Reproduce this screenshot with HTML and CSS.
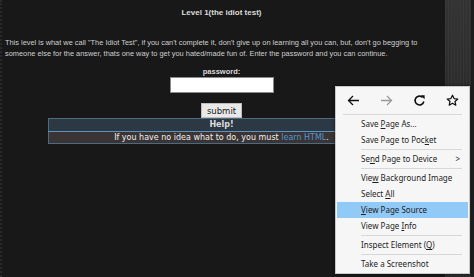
FILE: index.html
```html
<!DOCTYPE html>
<html lang="en">
<head>
    <meta charset="UTF-8">
    <title>Level 1</title>
    <link rel="stylesheet" href="styles.css">
</head>
<body>
    <div class="page">
        <main class="content">
            <h1>Level 1(the idiot test)</h1>
            <p class="intro">This level is what we call "The Idiot Test", if you can't complete it, don't give up on learning all you can, but, don't go begging to someone else for the answer, thats one way to get you hated/made fun of. Enter the password and you can continue.</p>
            <form class="login">
                <label for="pass">password:</label>
                <input id="pass" type="password">
                <button type="button">submit</button>
            </form>
            <table class="help">
                <tr><th>Help!</th></tr>
                <tr><td>If you have no idea what to do, you must <a href="#">learn HTML</a>.</td></tr>
            </table>
        </main>
        <div class="edge"></div>
    </div>

    <div class="context-menu">
        <div class="nav-row">
            <span class="nav-icon">
                <svg width="13" height="13" viewBox="0 0 13 13"><path d="M12 6.5H1.5M6 2L1.5 6.5 6 11" fill="none" stroke="#111" stroke-width="1.3"/></svg>
            </span>
            <span class="nav-icon">
                <svg width="13" height="13" viewBox="0 0 13 13"><path d="M1 6.5h10.5M7 2l4.5 4.5L7 11" fill="none" stroke="#9a9a9a" stroke-width="1.3"/></svg>
            </span>
            <span class="nav-icon">
                <svg width="13" height="13" viewBox="0 0 13 13"><path d="M10.8 7.5A4.4 4.4 0 1 1 9.6 3.4" fill="none" stroke="#111" stroke-width="1.6"/><path d="M7.6 1.2h4v4z" fill="#111"/></svg>
            </span>
            <span class="nav-icon">
                <svg width="13" height="13" viewBox="0 0 13 13"><path d="M6.5 1.2l1.6 3.4 3.7.4-2.8 2.5.8 3.7-3.3-1.9-3.3 1.9.8-3.7L1.2 5l3.7-.4z" fill="none" stroke="#111" stroke-width="1.2" stroke-linejoin="round"/></svg>
            </span>
        </div>
        <div class="sep"></div>
        <div class="item">Save <u>P</u>age As...</div>
        <div class="item">Save Page to Poc<u>k</u>et</div>
        <div class="sep"></div>
        <div class="item">Se<u>n</u>d Page to Device<span class="arrow">&gt;</span></div>
        <div class="sep"></div>
        <div class="item">Vie<u>w</u> Background Image</div>
        <div class="item">Select <u>A</u>ll</div>
        <div class="item active"><u>V</u>iew Page Source</div>
        <div class="item">View Page <u>I</u>nfo</div>
        <div class="sep"></div>
        <div class="item">Inspect Element (<u>Q</u>)</div>
        <div class="sep"></div>
        <div class="item">Take a Screenshot</div>
    </div>
</body>
</html>
```

FILE: styles.css
```css
* {
    margin: 0;
    padding: 0;
    box-sizing: border-box;
}

body {
    background: #181818;
    font-family: "Liberation Sans", Arial, sans-serif;
    color: #d6d6d6;
    height: 277px;
    overflow: hidden;
}

.page {
    display: flex;
    height: 100%;
}

.content {
    width: 441px;
    padding-top: 7px;
    border-left: 2px dotted #2a2a2a;
}

.edge {
    flex: 1;
    margin-left: 4px;
    background:
        repeating-linear-gradient(90deg, rgba(255,255,255,0.03) 0 1px, transparent 1px 3px),
        linear-gradient(180deg, #333 0%, #2b2b2b 40%, #303030 70%, #2a2a2a 100%);
    border-right: 3px solid #1e1e1e;
}

h1 {
    font-size: 8px;
    line-height: 11px;
    font-weight: bold;
    text-align: center;
    color: #dcdcdc;
}

.intro {
    margin-top: 19px;
    padding-left: 3px;
    font-size: 7.4px;
    line-height: 11px;
    color: #cfcfcf;
}

.login {
    margin-top: 7px;
    display: flex;
    flex-direction: column;
    align-items: center;
}

.login label {
    font-size: 7.5px;
    line-height: 11px;
    font-weight: bold;
    color: #d8d8d8;
}

.login input {
    width: 104px;
    height: 16px;
    border: 1px solid #8a8a8a;
    background: #fff;
}

.login button {
    margin-top: 10px;
    width: 41px;
    height: 15px;
    border: 1px solid #bdbdbd;
    background: #e9e9e9;
    font-family: "DejaVu Sans", Verdana, sans-serif;
    font-size: 8.5px;
    color: #222;
}

.help {
    width: 347px;
    margin: 0 auto;
    border-collapse: collapse;
    border: 1px solid #4c6a80;
    font-family: "DejaVu Sans", Verdana, sans-serif;
    font-size: 8px;
    text-align: center;
}

.help th {
    height: 13px;
    background: #2c3944;
    color: #dcdcdc;
    border-bottom: 1px solid #5f93bd;
    line-height: 12px;
}

.help td {
    height: 11px;
    background: #3a3534;
    color: #f0f0f0;
    line-height: 11px;
}

.help a {
    color: #4d95d8;
    text-decoration: none;
}

.context-menu {
    position: absolute;
    left: 335px;
    top: 86px;
    width: 135px;
    padding: 0 1px 1px;
    background: #f6f6f6;
    border: 1px solid #c9c9c9;
    box-shadow: 0 0 3px rgba(0, 0, 0, 0.6);
    font-family: "Noto Sans", "Open Sans", sans-serif;
    font-size: 8px;
    color: #1d1d1d;
}

.nav-row {
    display: grid;
    grid-template-columns: repeat(4, 33px);
    align-items: center;
    height: 26px;
}

.nav-icon {
    display: flex;
    justify-content: center;
}

.sep {
    height: 1px;
    margin: 1px 6px 1px 24px;
    background: #d8d8d8;
}

.nav-row + .sep {
    margin-left: 6px;
}

.item {
    height: 16px;
    line-height: 16px;
    padding-left: 24px;
    padding-right: 8px;
    white-space: nowrap;
}

.item.active {
    background: #91c9f7;
}

.arrow {
    float: right;
}
```
